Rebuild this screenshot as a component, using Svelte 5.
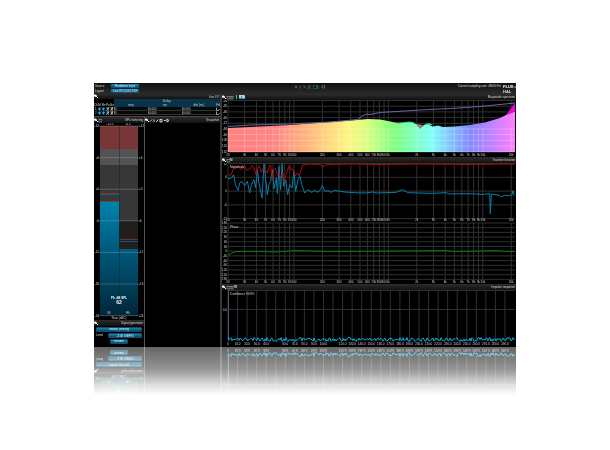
<script>
  const fx = (f) => 228 + 94.4 * Math.log10(f / 20);
  const freqs = [20, 30, 40, 50, 60, 70, 80, 90, 100, 200, 300, 400, 500, 600, 700, 800, 900, 1000,
    2000, 3000, 4000, 5000, 6000, 7000, 8000, 9000, 10000, 20000];
  const name = (f) => (f >= 1000 ? f / 1000 + 'k' : String(f));
  const range = (n, start, step) => Array.from({ length: n }, (_, i) => start + i * step);

  const levels = range(10, 100.5, 5.7).map((y, i) => ({ y, t: String(-24 - i * 12) }));
  const gains = range(5, 163.5, 13.8).map((y, i) => ({ y, t: String(12 - i * 6) }));
  const phases = range(13, 223, 4.7).map((y, i) => ({ y, t: String(180 - i * 30) }));
  const times = range(30, 228, 9.55).map((x, i) => ({ x, t: i ? i * 10 + '.0' : '0', show: i !== 5 && i !== 11 }));
  const meterTicks = range(7, 126, 31.6).map((y, i) => ({ y, t: ['+12', '+6', '+0', '-6', '-12', '-18', '-24'][i] }));

  // impulse response noise floor
  let seed = 11;
  const rnd = () => (seed = (seed * 16807) % 2147483647) / 2147483647;
  const noise = range(288, 228, 1).map((x) => `${x},${(337.5 + rnd() * 4).toFixed(1)}`).join(' ');

  const coherence = '30,62 37,68 42,58 50,38 57,45 62,38 68,50 75,45 80,38 86,52 95,48 103,37 108,45 114,65 119,45 124,38 130,58 136,45 142,52 148,60 153,40 158,36 163,82 167,50 172,45 178,65 183,60 188,72 195,60 198,85 203,68 208,55 214,37 219,50 224,48 232,68 238,60 243,68 248,55 254,36 262,35 280,33 290,35 300,33 308,35 315,41 325,35 350,34 400,33 480,34.500 600,33 740,34.500 892,33';
  const transfer = '30,78 40,75 47,65 52,95 60,112 65,90 72,85 80,98 88,85 95,120 100,95 108,80 113,105 118,50 123,90 132,135 138,33 142,70 148,125 153,95 158,85 163,50 168,108 175,75 178,122 183,40 188,110 192,33 197,100 203,80 209,125 215,95 222,105 228,55 233,115 240,80 246,70 251,95 260,120 270,110 280,118 290,113 300,118 307,110 313,97 320,115 330,113 340,118 350,112 365,115 380,117 410,119 444,120 464,117 474,120 534,118 554,110 569,119 600,120 644,121 684,119 694,123 750,122 794,124 815,122 817,182 820,123 844,127 852,132 859,127 874,128 882,125 885,113 888,128';
  const spectrum = '228,128 250,127 290,125 330,122 350,120.5 362,119.5 368,119 380,119.5 388,121 396,122.7 403,122.5 412,122.5 417,124.5 420,128.5 424,125 428,124.5 433,126.5 438,125.5 443,127 455,126.5 470,125 485,122.5 500,118 507,114.5 515,111.5';
</script>

{#snippet tools(n)}
  <svg class="tools" viewBox={`0 0 ${n * 4} 5`} width={n * 4} height="5" aria-hidden="true">
    <path d="M.5 1h1.6v1.2H.5zM2 2l2 2" stroke="#fff" stroke-width="1" fill="#fff" />
    {#each range(n - 1, 5, 4) as x, i}
      <rect {x} y="1.5" width={i % 2 ? 2 : 3} height="2.5" fill="none" stroke="#aaa" stroke-width=".6" />
    {/each}
  </svg>
{/snippet}

{#snippet grid(top, bottom, labelY)}
  {#each freqs as f}
    <line x1={fx(f)} x2={fx(f)} y1={top} y2={bottom} class="g" />
    <text x={fx(f)} y={labelY} class="mid">{name(f)}</text>
  {/each}
{/snippet}

{#snippet rows(items)}
  {#each items as r}
    <line x1="228" x2="515" y1={r.y} y2={r.y} class="g" />
    <text x="227" y={r.y + 1} class="end">{r.t}</text>
  {/each}
{/snippet}

<main>
  <div class="app">
    <header>
      <div class="io">
        <label for="source">Source</label>
        <select id="source"><option>Hardware input</option></select>
        <label for="layout">Layout</label>
        <select id="layout"><option>Live I/O (2ch) 1/M</option></select>
      </div>
      <svg class="transport" viewBox="0 0 32 6" width="32" height="6" aria-hidden="true">
        <path d="M1 1.5l2 2.5M3 1.5L1 4M6 1.5v3M9.500 1.500l3 3M9.500 2.500h1.500M14 2h3M14 4h3M24 1.500v3M28 1.500h2.500v2.500H28z" fill="none" stroke="#777" stroke-width=".7" />
        <path d="M19.500 2.500v-1h1M22 1.500h1v1M23 3.500v1h-1M20.500 4.500h-1v-1" fill="none" stroke="#2098aa" stroke-width=".8" />
      </svg>
      <div class="rate">Current sampling rate: 48000 Hz</div>
      <div class="brand"><b>FLUX::</b><b class="hal">HAL</b></div>
    </header>

    <div class="body">
      <aside>
        <section class="routing">
          <div class="bar">{@render tools(1)}<span>Live I/O</span></div>
          <table>
            <thead>
              <tr><td colspan="5"></td><th colspan="4" class="blue">Delay</th></tr>
              <tr>
                <th>Ch</th><th>M.</th><th>Re</th><th>Po</th><th>Ge</th>
                <th class="blue wide">smp</th><th class="blue wide">ms</th><th class="blue wide">dist (m.)</th><th class="blue">Fd</th>
              </tr>
            </thead>
            <tbody>
              {#each [1, 2] as ch}
                <tr>
                  <td>{ch}</td>
                  {#each ['#1bb4dd', '#1bb4dd', '#ddd', '#eee'] as c, i}
                    <td>
                      <svg viewBox="0 0 4 4" width="4" height="4" aria-hidden="true">
                        {#if i < 2}<path d="M0 2l2-1.500v3zM2 2l1.500-1.500M2.500 3l1 .5" fill={c} stroke={c} stroke-width=".6" />
                        {:else}<path d="M3 .5L.5 3.500M.5 1h2.500M1.500 3h1.500" fill="none" stroke={c} stroke-width=".9" />{/if}
                      </svg>
                    </td>
                  {/each}
                  <td><input aria-label={`Delay samples ${ch}`} value="0" /></td>
                  <td><input aria-label={`Delay ms ${ch}`} value="0.000" /></td>
                  <td><input aria-label={`Delay distance ${ch}`} value="0.000" /></td>
                  <td>
                    <svg viewBox="0 0 4 4" width="4" height="4" aria-hidden="true"><path d="M.5.500v3h2l1-1.500" fill="none" stroke="#ccc" stroke-width=".8" /></svg>
                  </td>
                </tr>
              {/each}
            </tbody>
          </table>
        </section>

        <div class="lower">
          <section class="metering">
            <div class="bar">{@render tools(2)}<span>SPL metering</span></div>
            <svg class="plot" viewBox="94 123 50 197">
              <defs>
                <linearGradient id="lvl" gradientUnits="userSpaceOnUse" x1="0" x2="0" y1="201" y2="316">
                  <stop offset="0" stop-color="#0083ac" /><stop offset=".45" stop-color="#00587a" /><stop offset="1" stop-color="#002638" />
                </linearGradient>
              </defs>
              <rect x="100" y="126" width="38" height="23" fill="#783636" />
              <rect x="100" y="149" width="38" height="16" fill="#535353" />
              <rect x="100" y="165" width="38" height="151" fill="#373737" />
              <rect x="119" y="221" width="19" height="28" fill="#221e1e" />
              <rect x="100" y="201" width="19" height="115" fill="url(#lvl)" />
              <rect x="119" y="249" width="19" height="67" fill="url(#lvl)" />
              <path d="M100 193.500h19M100 201.500h19M119 239.500h19" stroke="#7c3a30" stroke-width=".8" />
              <path d="M100 194.500h19M119 241.500h19" stroke="#16678a" stroke-width=".8" />
              <path d="M119.500 126v190" stroke="#082a38" stroke-width="1" opacity=".5" />
              {#each meterTicks as t}
                <line x1="98" x2="140" y1={t.y} y2={t.y} stroke="#a9bac4" opacity=".3" />
                <text x="99" y={t.y + 1} class="end">{t.t}</text>
                <text x="139" y={t.y + 1}>{t.t}</text>
              {/each}
              <text x="110" y="125" class="mid">-13.5</text>
              <text x="128" y="125" class="mid">-6.5</text>
              <text x="119" y="299" class="mid bold">Pk. dB SPL</text>
              <text x="119" y="304" class="mid big">62</text>
              <text x="109" y="314" class="mid">IN</text>
              <text x="128" y="314" class="mid">Rk</text>
              <text x="119" y="319" class="mid">Slow (dBC)</text>
            </svg>
            <div class="bar">{@render tools(1)}<span>Signal generator</span></div>
            <div class="generator">
              <button>Sweep (sweep)</button>
              <div class="level"><label for="level">Level</label><input id="level" value="-3.00 (dBFS)" /></div>
              <button class="enable">Enable</button>
            </div>
          </section>
          <section class="snapshot">
            <div class="bar">
              {@render tools(1)}
              <svg class="tools" viewBox="0 0 20 5" width="20" height="5" aria-hidden="true">
                <path d="M1 3.500l2-2M5 1.500v2.500M7 4l2.500-2.500M11 1.500h2v2.500h-2zM15 2.500h2M18 1l2 1.500L18 4z" fill="none" stroke="#ddd" stroke-width=".9" />
              </svg>
              <span>Snapshot</span>
            </div>
          </section>
        </div>
      </aside>

      <div class="charts">
        <section>
          <div class="bar">{@render tools(3)}<i class="on"></i><em>RTA</em><span>Magnitude spectrum</span></div>
          <svg class="plot" viewBox="222 100 294 57">
            <defs>
              <linearGradient id="rainbow" gradientUnits="userSpaceOnUse" x1="228" x2="515" y1="0" y2="0">
                <stop offset="0" stop-color="#ff8080" /><stop offset=".16" stop-color="#ff8484" />
                <stop offset=".28" stop-color="#ffb880" /><stop offset=".42" stop-color="#fdf680" />
                <stop offset=".49" stop-color="#d4ff80" /><stop offset=".58" stop-color="#80ff80" />
                <stop offset=".71" stop-color="#80fff8" /><stop offset=".84" stop-color="#8489ff" />
                <stop offset=".91" stop-color="#b983ff" /><stop offset="1" stop-color="#ff80ff" />
              </linearGradient>
            </defs>
            {@render rows(levels)}
            {@render grid(100, 152, 156)}
            <polygon points={`228,152 ${spectrum} 515,152`} fill="url(#rainbow)" />
            <path d="M388 121l8 1.700h7l-4 1zM414 123.500l3 1 3 4.500 3-4z" fill="#a07a86" />
            <path d="M402 123q8-3 13 0zM424 125q5-3.500 9 0z" fill="#19f59a" />
            <path d="M506 115L515 103V111.500Z" fill="#f000e0" />
            {#each levels.slice(5) as l}<line x1="228" x2="515" y1={l.y} y2={l.y} stroke="#fff" opacity=".22" />{/each}
            {#each freqs as f}<line x1={fx(f)} x2={fx(f)} y1="128" y2="152" stroke="#fff" opacity=".22" />{/each}
            <polyline points="228,126.500 250,125 290,124 330,122 358,119.500 362,116 367,114 370,114.500 380,112.500 420,110 450,108.500 480,106.500 500,104.500 515,103" class="trace" stroke="#6868a8" />
          </svg>
        </section>

        <section>
          <div class="bar">{@render tools(2)}<b>M</b><span>Transfer function</span></div>
          <svg class="plot" viewBox="222 163 294 121">
            {@render rows(gains)}
            {@render grid(163, 218, 221)}
            <g transform="translate(218 153) scale(.33333)">
              <polyline points={transfer} class="trace" stroke="#087ea8" />
              <polyline points={coherence} class="trace" stroke="#b5090b" />
            </g>
            <text x="230" y="168">Magnitude</text>
            {@render rows(phases)}
            {@render grid(223, 280, 283)}
            <polyline points="228,255 232,253 237,251.500 260,251.500 275,252 295,250.500 330,251.500 400,251 445,250.500 455,251.500 480,251 495,250.500 505,251.500 515,251.500" class="trace" stroke="#087a12" />
            <text x="230" y="228">Phase</text>
          </svg>
        </section>

        <section>
          <div class="bar">{@render tools(3)}<b>IR</b><span>Impulse response</span></div>
          <svg class="plot" viewBox="222 290 294 57">
            <path d="M228 290.500h287M228 309.500h287" class="g" />
            <text x="227" y="311" class="end">0.0</text>
            {#each times as t}
              <line x1={t.x} x2={t.x} y1="290" y2="341" class="g" />
              {#if t.show}<text x={t.x} y="345" class="mid">{t.t}</text>{/if}
            {/each}
            <line x1="228.500" x2="228.500" y1="290" y2="341" stroke="#4a5878" />
            <polyline points={noise} class="trace" stroke="#0caadc" />
            <text x="230" y="295">Confidence 99.8%</text>
          </svg>
        </section>
      </div>
    </div>
  </div>
</main>

<style>
  :global(body) {
    margin: 0;
    background: #fff;
  }
  main {
    padding: 83px 94px 103px;
    font: 3px/4px "Liberation Sans", Arial, sans-serif;
    color: #d4d4d4;
  }
  .app {
    background: #000;
    -webkit-box-reflect: below 0 linear-gradient(to top, rgba(0, 0, 0, 0.6), rgba(0, 0, 0, 0.42) 22px, rgba(0, 0, 0, 0.13) 38px, transparent 48px);
  }
  header {
    display: flex;
    align-items: flex-start;
    height: 11px;
    background: linear-gradient(#101010, #2b2b2b);
  }
  .io {
    display: grid;
    grid-template-columns: 16px 28px;
    grid-auto-rows: 4px;
    row-gap: 1px;
    padding: 1px 0 0 1px;
    white-space: nowrap;
  }
  select,
  button,
  input {
    appearance: none;
    box-sizing: border-box;
    min-width: 0;
    margin: 0;
    padding: 0;
    border: 0;
    border-radius: 1px;
    background: linear-gradient(#1687b8, #06486b);
    color: #d8eefa;
    font: inherit;
    text-align: center;
    text-align-last: center;
    height: 4px;
    overflow: hidden;
    white-space: nowrap;
  }
  .transport {
    margin: 1px auto 0 155px;
  }
  .rate {
    padding-top: 1px;
    white-space: nowrap;
  }
  .brand {
    display: flex;
    flex-direction: column;
    width: 13px;
    padding: 1px 0 0 2px;
    color: #fff;
    font-size: 4px;
    line-height: 5px;
  }
  .hal {
    color: #ddd;
  }
  .body {
    display: flex;
  }
  aside {
    flex: 3 1 0;
    display: flex;
    flex-direction: column;
    border-right: 2px solid #383838;
    min-width: 0;
  }
  .charts {
    flex: 7 1 0;
    min-width: 0;
  }
  .bar {
    display: flex;
    align-items: center;
    height: 6px;
    background: linear-gradient(#2d2d2d, #111);
    white-space: nowrap;
    overflow: hidden;
  }
  .bar span {
    margin-left: auto;
    padding-right: 1px;
  }
  .tools {
    flex: none;
  }
  .on {
    width: 1px;
    height: 4px;
    margin: 0 2px;
    background: #18c8dc;
  }
  .bar em {
    background: #4a88a8;
    color: #fff;
    font-style: normal;
    font-weight: bold;
  }
  .plot {
    display: block;
    width: 100%;
    height: auto;
  }
  .plot text {
    fill: #d0d0d0;
    font-size: 3px;
  }
  .plot .mid {
    text-anchor: middle;
  }
  .plot .end {
    text-anchor: end;
  }
  .plot .bold {
    fill: #fff;
    font-weight: bold;
  }
  .plot .big {
    fill: #fff;
    font-size: 5px;
    font-weight: bold;
  }
  .g {
    stroke: #303030;
    stroke-width: 1px;
  }
  .trace {
    fill: none;
    stroke-width: 1px;
    vector-effect: non-scaling-stroke;
  }
  .routing {
    height: 23px;
    border-bottom: 1px solid #444;
    box-sizing: border-box;
  }
  .routing .bar {
    height: 5px;
  }
  table {
    width: 100%;
    table-layout: auto;
    border-collapse: collapse;
    font-size: 3px;
    line-height: 4px;
  }
  th,
  td {
    height: 4px;
    padding: 0;
    font-weight: normal;
    text-align: center;
  }
  td svg {
    display: block;
  }
  td input {
    display: block;
    width: 100%;
    border-left: 1px solid #777;
    border-bottom: 1px solid #333;
    background: #080808;
    color: #ccc;
    text-align: left;
    text-align-last: left;
  }
  .blue {
    background: #07344b;
  }
  .wide {
    width: 28%;
  }
  .lower {
    display: flex;
    flex: 1;
  }
  .metering {
    flex: 2 1 0;
    min-width: 0;
    border-right: 1px solid #555;
  }
  .snapshot {
    flex: 3 1 0;
    min-width: 0;
  }
  .generator {
    display: flex;
    flex-direction: column;
    gap: 1px;
    padding: 1px 2px;
  }
  .level {
    display: flex;
    justify-content: space-between;
  }
  .level input {
    width: 34px;
  }
  .generator button,
  .generator input {
    height: 5px;
    border: 1px solid #174d69;
    line-height: 3px;
  }
  .generator .enable {
    width: 18px;
    margin-left: 14px;
  }
</style>
